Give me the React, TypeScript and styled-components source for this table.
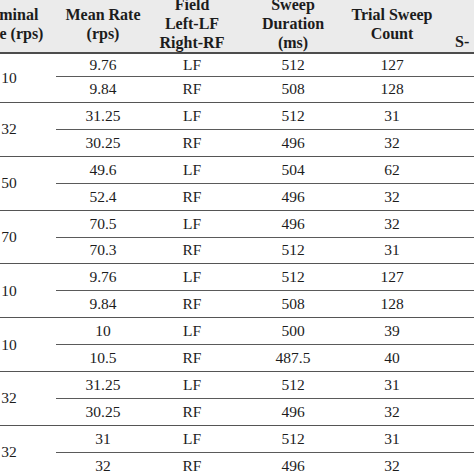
import React from 'react'
import styled, { createGlobalStyle } from 'styled-components'

const GlobalStyle = createGlobalStyle`
  html, body {
    margin: 0;
    padding: 0;
    background: #ffffff;
    overflow: hidden;
  }
`

const Page = styled.div`
  width: 474px;
  height: 474px;
  overflow: hidden;
  font-family: "Liberation Serif", "Times New Roman", serif;
  color: #1c1c1c;
`

const Table = styled.div`
  margin-left: -38px;
  margin-top: -5px;
  width: 560px;
  display: flex;
  flex-direction: column;
`

const cols = '94px 94px 84px 118px 80px 1fr'

const Header = styled.div`
  display: grid;
  grid-template-columns: ${cols};
  height: 56.5px;
  background: #ebebeb;
  border-bottom: 2px solid #4d4d4d;
`

const HeadCell = styled.div<{ $align?: 'center' | 'end'; $pad?: number }>`
  display: flex;
  flex-direction: column;
  justify-content: ${p => (p.$align === 'end' ? 'flex-end' : 'center')};
  align-items: ${p => (p.$pad ? 'flex-start' : 'center')};
  padding-left: ${p => p.$pad ?? 0}px;
  padding-bottom: ${p => (p.$align === 'end' ? 1 : 0)}px;
  font-weight: bold;
  font-size: 16px;
  line-height: 19px;
  text-align: center;
  white-space: nowrap;
`

const Group = styled.div<{ $tight?: boolean }>`
  display: flex;
  height: ${p => (p.$tight ? 49.5 : 53.8)}px;
  box-sizing: border-box;
  border-bottom: 1.5px solid #555555;
`

const RateCell = styled.div`
  width: 94px;
  flex: none;
  display: flex;
  align-items: center;
  justify-content: center;
  font-size: 15.5px;
`

const SubRows = styled.div`
  flex: 1;
  display: flex;
  flex-direction: column;
`

const SubRow = styled.div`
  flex: 1;
  display: grid;
  grid-template-columns: 94px 84px 118px 80px 1fr;
  align-items: center;
  font-size: 15.5px;
  box-sizing: border-box;

  &:first-child {
    border-bottom: 1.5px solid #5a5a5a;
  }
`

const Tight = styled(SubRow)`
  &:first-child {
    flex: none;
    height: 23px;
  }
`

const Value = styled.span`
  text-align: center;
`

type Row = { mean: string; field: string; dur: string; count: string }
type GroupData = { nominal: string; rows: Row[] }

const data: GroupData[] = [
  { nominal: '10', rows: [
    { mean: '9.76', field: 'LF', dur: '512', count: '127' },
    { mean: '9.84', field: 'RF', dur: '508', count: '128' },
  ] },
  { nominal: '32', rows: [
    { mean: '31.25', field: 'LF', dur: '512', count: '31' },
    { mean: '30.25', field: 'RF', dur: '496', count: '32' },
  ] },
  { nominal: '50', rows: [
    { mean: '49.6', field: 'LF', dur: '504', count: '62' },
    { mean: '52.4', field: 'RF', dur: '496', count: '32' },
  ] },
  { nominal: '70', rows: [
    { mean: '70.5', field: 'LF', dur: '496', count: '32' },
    { mean: '70.3', field: 'RF', dur: '512', count: '31' },
  ] },
  { nominal: '10', rows: [
    { mean: '9.76', field: 'LF', dur: '512', count: '127' },
    { mean: '9.84', field: 'RF', dur: '508', count: '128' },
  ] },
  { nominal: '10', rows: [
    { mean: '10', field: 'LF', dur: '500', count: '39' },
    { mean: '10.5', field: 'RF', dur: '487.5', count: '40' },
  ] },
  { nominal: '32', rows: [
    { mean: '31.25', field: 'LF', dur: '512', count: '31' },
    { mean: '30.25', field: 'RF', dur: '496', count: '32' },
  ] },
  { nominal: '32', rows: [
    { mean: '31', field: 'LF', dur: '512', count: '31' },
    { mean: '32', field: 'RF', dur: '496', count: '32' },
  ] },
]

const App: React.FC = () => {
  return (
    <Page>
      <GlobalStyle />
      <Table>
        <Header>
          <HeadCell><span>Nominal</span><span>Rate (rps)</span></HeadCell>
          <HeadCell><span>Mean Rate</span><span>(rps)</span></HeadCell>
          <HeadCell><span>Field</span><span>Left-LF</span><span>Right-RF</span></HeadCell>
          <HeadCell><span>Sweep</span><span>Duration</span><span>(ms)</span></HeadCell>
          <HeadCell><span>Trial Sweep</span><span>Count</span></HeadCell>
          <HeadCell $align="end" $pad={23}><span>S-</span></HeadCell>
        </Header>
        {data.map((g, i) => {
          const Row = i === 0 ? Tight : SubRow
          return (
            <Group key={i} $tight={i === 0}>
              <RateCell>{g.nominal}</RateCell>
              <SubRows>
                {g.rows.map((r, j) => (
                  <Row key={j}>
                    <Value>{r.mean}</Value>
                    <Value>{r.field}</Value>
                    <Value>{r.dur}</Value>
                    <Value>{r.count}</Value>
                    <span />
                  </Row>
                ))}
              </SubRows>
            </Group>
          )
        })}
      </Table>
    </Page>
  )
}

export default App
